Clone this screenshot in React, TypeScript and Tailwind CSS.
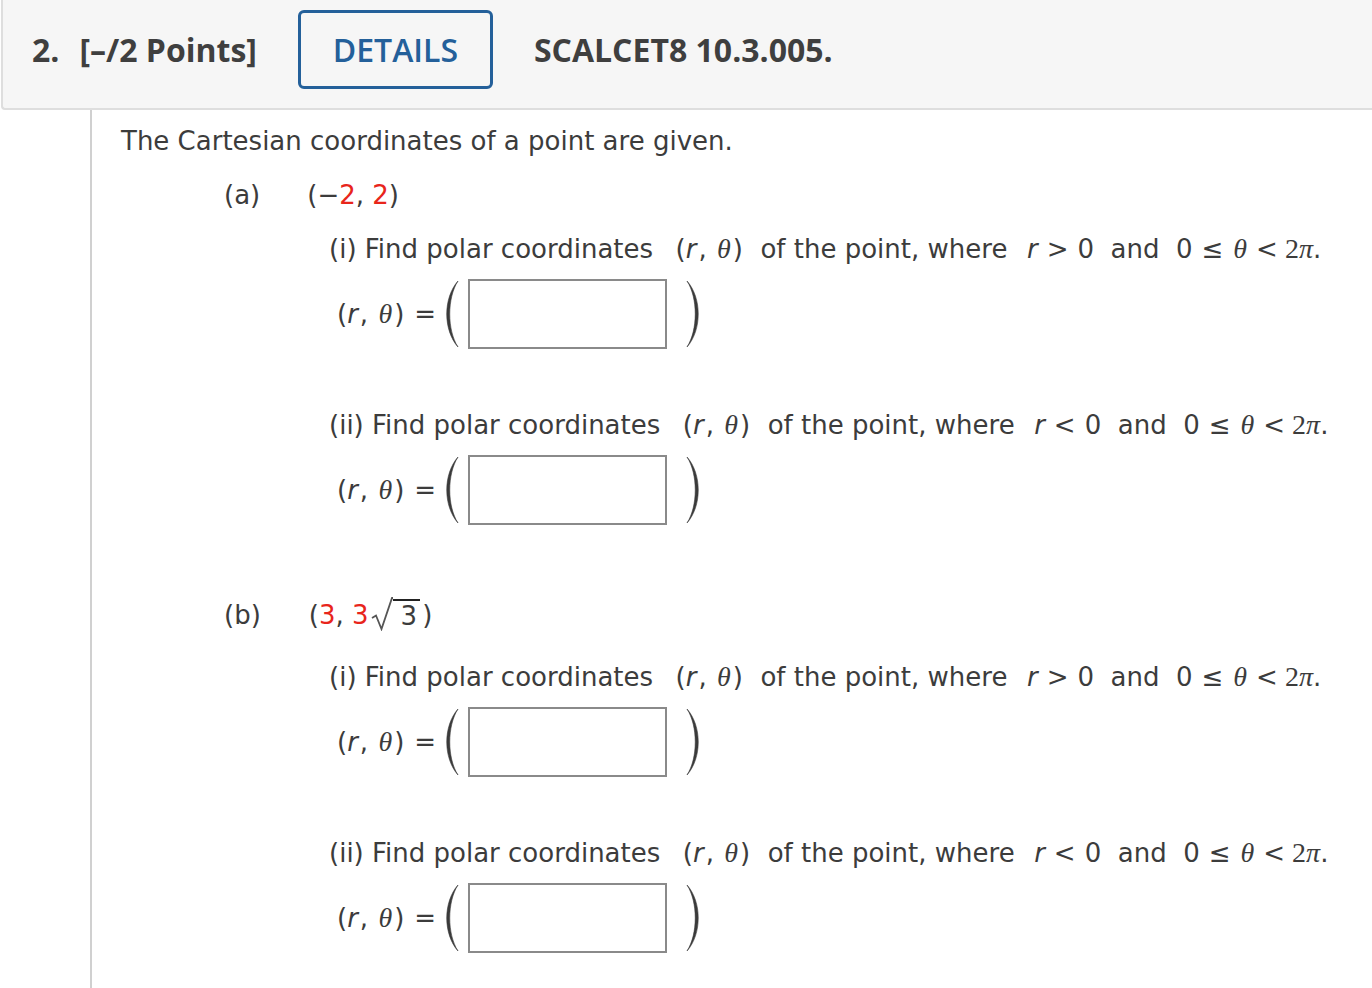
const body = { fontFamily: '"DejaVu Sans", Verdana, sans-serif' };
const serif = { fontFamily: '"Liberation Serif", "DejaVu Serif", serif' };

function R() {
    return (
        <span className="pr-[2px] italic" style={body}>
            r
        </span>
    );
}

function Theta(props: { tight?: boolean }) {
    return (
        <span className={`${props.tight ? "px-[1px]" : "px-[2px]"} text-[28px] italic`} style={serif}>
            θ
        </span>
    );
}

function Line(props: { children: React.ReactNode; className?: string }) {
    return (
        <div className={`h-[40px] whitespace-pre leading-[40px] ${props.className ?? ""}`}>
            {props.children}
        </div>
    );
}

function Paren(props: { flip?: boolean }) {
    return (
        <svg
            width="18"
            height="68"
            viewBox="0 0 18 68"
            className={props.flip ? "-scale-x-100" : ""}
        >
            <path d="M16 1 C1 18 1 50 16 67 C5 50 5 18 16 1 Z" fill="#3a3a3a" stroke="#3a3a3a" strokeWidth="0.6" />
        </svg>
    );
}

function Question(props: { roman: string; sign: string }) {
    return (
        <>
            <Line className="ml-[208px]">
                ({props.roman}) Find polar coordinates{"  "}
                <span className="ml-[6px] mr-[1px]">
                    (<R />, <Theta />)
                </span>
                {"  "}of the point, where{"  "}
                <span className="ml-[3px]">
                    <R />
                </span>
                <span className="ml-[7px] mr-[9px]">{props.sign}</span>0{"  "}and{"  "}0
                <span className="mx-[9px]">≤</span>
                <Theta tight />
                <span className="ml-[8px] mr-[7px]">&lt;</span>
                <span className="text-[28px]" style={serif}>
                    2<span className="italic">π</span>
                </span>
                .
            </Line>
            <div className="ml-[216px] mt-[10px] flex h-[70px] items-center">
                <span className="whitespace-pre">
                    (<R />, <Theta />)<span className="ml-[10px]">=</span>
                </span>
                <span className="ml-[6px]">
                    <Paren />
                </span>
                <div className="ml-[8px] h-[70px] w-[199px] border-2 border-[#8a8a8a] bg-white" />
                <span className="ml-[18px]">
                    <Paren flip />
                </span>
            </div>
        </>
    );
}

export default function App() {
    return (
        <div className="min-h-[988px] bg-white text-[#3c3c3c]">
            <div
                className="ml-[1px] flex h-[110px] items-start rounded-bl-[4px] border-b-2 border-l-2 border-[#dedede] bg-[#f6f6f6] pt-[10px]"
                style={{ fontFamily: '"Open Sans", sans-serif' }}
            >
                <div className="flex h-[79px] items-center text-[32px] font-bold text-[#3f3f3f]">
                    <span className="ml-[29px]">2.</span>
                    <span className="ml-[20px]">[–/2 Points]</span>
                    <div className="ml-[41px] flex h-[79px] w-[195px] items-center justify-center rounded-[6px] border-[3px] border-[#24609a] font-semibold text-[#24609a]">
                        DETAILS
                    </div>
                    <span className="ml-[41px]">SCALCET8 10.3.005.</span>
                </div>
            </div>
            <div className="flex">
                <div className="h-[878px] w-[92px] border-r-2 border-[#d0d0d0]" />
                <div className="pl-[29px] pt-[11px] text-[26px]" style={body}>
                    <Line>The Cartesian coordinates of a point are given.</Line>
                    <Line className="ml-[103px] mt-[14px]">
                        (a)
                        <span className="ml-[47px]">
                            (−<span className="text-[#e8251b]">2</span>, <span className="text-[#e8251b]">2</span>)
                        </span>
                    </Line>
                    <div className="mt-[14px]">
                        <Question roman="i" sign=">" />
                    </div>
                    <div className="mt-[56px]">
                        <Question roman="ii" sign="<" />
                    </div>
                    <Line className="ml-[103px] mt-[70px]">
                        (b)
                        <span className="ml-[48px] inline-flex items-end">
                            (<span className="text-[#e8251b]">3</span>, <span className="text-[#e8251b]">3</span>
                            <svg width="22" height="34" viewBox="0 0 22 34" className="mb-[4px] ml-[2px]">
                                <path d="M1 21 L5 18.5 L10.5 32 L21 1 L22 1" fill="none" stroke="#555" strokeWidth="1.8" />
                            </svg>
                            <span className="mb-[4px] border-t-2 border-[#222] pl-[8px] pr-[3px] leading-[30px]">3</span>
                            <span className="ml-[2px]">)</span>
                        </span>
                    </Line>
                    <div className="mt-[22px]">
                        <Question roman="i" sign=">" />
                    </div>
                    <div className="mt-[56px]">
                        <Question roman="ii" sign="<" />
                    </div>
                </div>
            </div>
        </div>
    );
}
